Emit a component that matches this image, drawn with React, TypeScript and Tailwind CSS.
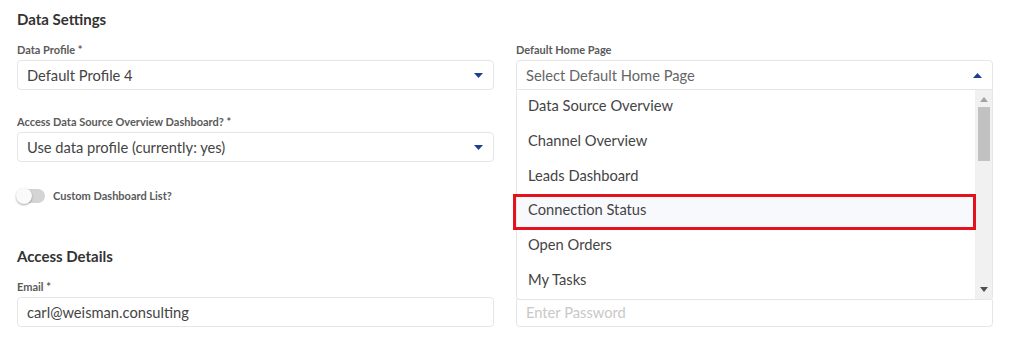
import React from "react";

const Caret = ({ up = false }: { up?: boolean }) => (
  <svg width="9" height="5" viewBox="0 0 9 5" className="shrink-0">
    {up ? <path d="M0 5 L4.5 0 L9 5 Z" fill="#1c3f94" /> : <path d="M0 0 L9 0 L4.5 5 Z" fill="#1c3f94" />}
  </svg>
);

const Label = ({ children }: { children: React.ReactNode }) => (
  <div className="text-[11px] leading-[12px] font-bold text-[#5a5a5a] mb-[4px]">{children}</div>
);

const SelectBox = ({ value }: { value: string }) => (
  <div className="h-[30px] border border-[#e6e6e6] rounded-[4px] bg-white flex items-center justify-between pl-[9px] pr-[10px]">
    <span className="text-[14.7px] leading-[18px] text-[#444] pb-[1px]">{value}</span>
    <Caret />
  </div>
);

const items = ["Data Source Overview", "Channel Overview", "Leads Dashboard", "Connection Status", "Open Orders", "My Tasks"];

export default function App() {
  return (
    <div className="w-[1009px] h-[344px] bg-white overflow-hidden pl-[17px] pr-[16px] pt-[10px]" style={{ fontFamily: "Lato, 'Noto Sans', sans-serif" }}>
      <div className="text-[15px] leading-[18px] font-bold text-[#333]">Data Settings</div>
      <div className="grid grid-cols-2 gap-x-[22px] mt-[16px]">
        {/* Row 1 */}
        <div>
          <Label>Data Profile *</Label>
          <SelectBox value="Default Profile 4" />
        </div>
        <div className="relative">
          <Label>Default Home Page</Label>
          <div className="h-[30px] border border-[#e6e6e6] rounded-t-[4px] bg-white flex items-center justify-between pl-[9px] pr-[10px]">
            <span className="text-[14.7px] leading-[18px] text-[#666] pb-[1px]">Select Default Home Page</span>
            <Caret up />
          </div>
          <div className="absolute left-0 right-0 top-[46px] z-10 h-[210px] bg-white border-l border-r border-b border-[#e6e6e6] rounded-b-[4px] flex">
            <div className="flex-1 flex flex-col">
              {items.map((it) =>
                it === "Connection Status" ? (
                  <div key={it} className="relative h-[35px] flex items-center pl-[11px] pb-[5px] bg-[#f8f9fd] text-[14.7px] text-[#444]">
                    <div className="absolute left-[-4px] right-[-1px] top-0 bottom-[-1px] border-[3px] border-[#e3121d]" />
                    {it}
                  </div>
                ) : (
                  <div key={it} className="h-[35px] flex items-center pl-[11px] pb-[5px] text-[14.7px] text-[#444]">
                    {it}
                  </div>
                )
              )}
            </div>
            <div className="w-[17px] bg-[#f1f1f1] flex flex-col items-center">
              <svg width="8" height="5" viewBox="0 0 8 5" className="mt-[7px]">
                <path d="M0 5 L4 0 L8 5 Z" fill="#a3a3a3" />
              </svg>
              <div className="w-[12px] h-[54px] bg-[#c1c1c1] mt-[5px]" />
              <div className="flex-1" />
              <svg width="8" height="5" viewBox="0 0 8 5" className="mb-[7px]">
                <path d="M0 0 L8 0 L4 5 Z" fill="#505050" />
              </svg>
            </div>
          </div>
        </div>

        {/* Row 2 */}
        <div className="mt-[26px]">
          <Label>Access Data Source Overview Dashboard? *</Label>
          <SelectBox value="Use data profile (currently: yes)" />
        </div>
        <div />

        {/* Row 3 */}
        <div className="mt-[26px] flex items-center gap-[8px] h-[16px]">
          <div className="relative w-[28px] h-[14px] rounded-full bg-[#d4d4d4]">
            <div className="absolute left-[-1px] top-[-1px] w-[16px] h-[16px] rounded-full bg-[#fafafa] shadow-[0_1px_2px_rgba(0,0,0,0.35)]" />
          </div>
          <span className="text-[11px] leading-[12px] font-bold text-[#5a5a5a]">Custom Dashboard List?</span>
        </div>
        <div />

        {/* Row 4 */}
        <div className="mt-[43px] text-[15px] leading-[18px] font-bold text-[#333]">Access Details</div>
        <div />

        {/* Row 5 */}
        <div className="mt-[16px]">
          <Label>Email *</Label>
          <div className="h-[30px] border border-[#e6e6e6] rounded-[4px] bg-white flex items-center pl-[9px]">
            <span className="text-[14.7px] leading-[18px] text-[#444] pb-[1px]">carl@weisman.consulting</span>
          </div>
        </div>
        <div className="mt-[16px]">
          <div className="h-[16px]" />
          <div className="h-[30px] border border-[#e6e6e6] rounded-[4px] bg-white flex items-center pl-[9px]">
            <span className="text-[14.7px] leading-[18px] text-[#c8c8c8] pb-[1px]">Enter Password</span>
          </div>
        </div>
      </div>
    </div>
  );
}
